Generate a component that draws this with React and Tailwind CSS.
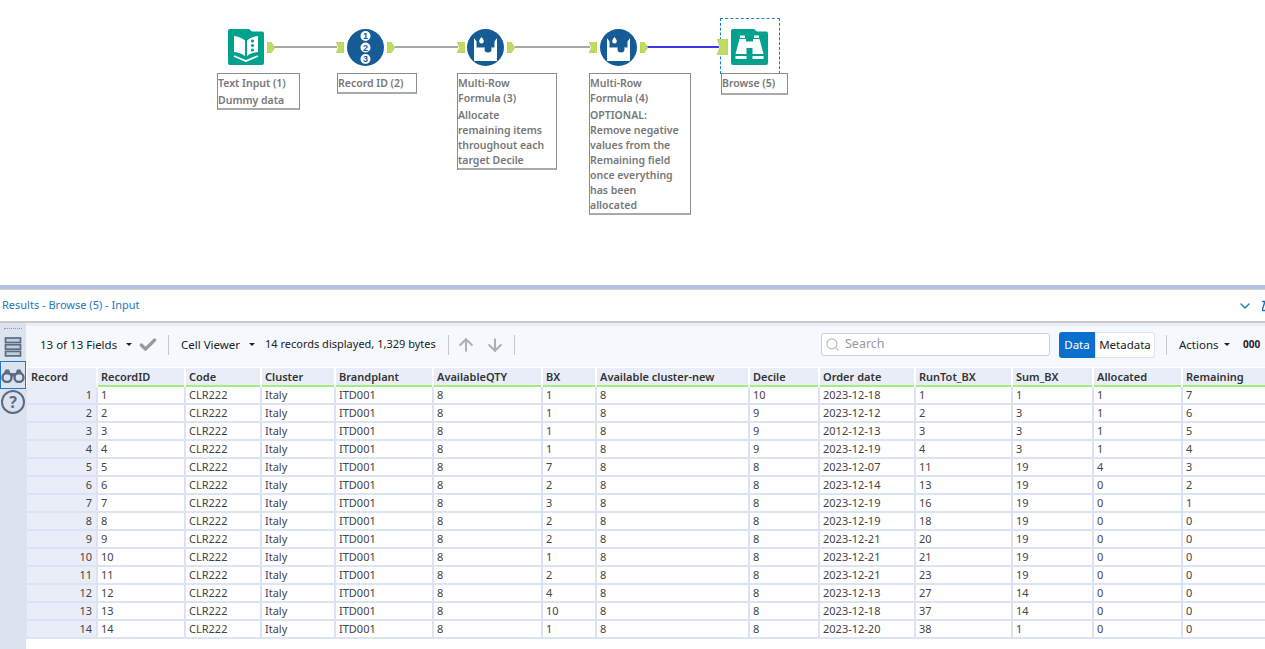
import React from 'react';
import { ChevronDown, Check, ArrowUp, ArrowDown, Search } from 'lucide-react';

const columns = ['RecordID', 'Code', 'Cluster', 'Brandplant', 'AvailableQTY', 'BX', 'Available cluster-new', 'Decile', 'Order date', 'RunTot_BX', 'Sum_BX', 'Allocated', 'Remaining'];

const rows = [
  [1, 8, 1, 10, '2023-12-18', 1, 1, 1, 7],
  [2, 8, 1, 9, '2023-12-12', 2, 3, 1, 6],
  [3, 8, 1, 9, '2012-12-13', 3, 3, 1, 5],
  [4, 8, 1, 9, '2023-12-19', 4, 3, 1, 4],
  [5, 8, 7, 8, '2023-12-07', 11, 19, 4, 3],
  [6, 8, 2, 8, '2023-12-14', 13, 19, 0, 2],
  [7, 8, 3, 8, '2023-12-19', 16, 19, 0, 1],
  [8, 8, 2, 8, '2023-12-19', 18, 19, 0, 0],
  [9, 8, 2, 8, '2023-12-21', 20, 19, 0, 0],
  [10, 8, 1, 8, '2023-12-21', 21, 19, 0, 0],
  [11, 8, 2, 8, '2023-12-21', 23, 19, 0, 0],
  [12, 8, 4, 8, '2023-12-13', 27, 14, 0, 0],
  [13, 8, 10, 8, '2023-12-18', 37, 14, 0, 0],
  [14, 8, 1, 8, '2023-12-20', 38, 1, 0, 0],
];

function Caret() {
  return <span className="w-0 h-0 border-x-[3px] border-x-transparent border-t-[3px] border-t-[#222]" />;
}

function OutAnchor({ className }) {
  return (
    <svg className={`absolute ${className}`} width="8" height="11" viewBox="0 0 8 11">
      <path d="M0 0h4l4 5.500-4 5.500H0z" fill="#bfdc62" stroke="#a9c653" strokeWidth="0.5" />
    </svg>
  );
}

function InAnchor({ className }) {
  return (
    <svg className={`absolute ${className}`} width="8" height="11" viewBox="0 0 8 11">
      <path d="M0 0h8v11H0l2.500-5.500z" fill="#bfdc62" stroke="#a9c653" strokeWidth="0.5" />
    </svg>
  );
}

function FormulaIcon({ className }) {
  return (
    <svg className={`absolute ${className}`} width="37" height="37" viewBox="0 0 37 37">
      <circle cx="18.500" cy="18.500" r="18.500" fill="#155c96" />
      <path d="M7 9l2.500 3.500v6h18v-6L30 9v23H7z" fill="#fff" />
      <path d="M14.500 8c1.500 1.900 2.300 3.100 2.300 4.200a2.300 2.300 0 0 1-4.600 0c0-1.100.8-2.300 2.300-4.200z" fill="#fff" />
      <path d="M21 13.500c2.200 2.900 3.500 4.800 3.500 6.600a3.500 3.500 0 0 1-7 0c0-1.800 1.300-3.700 3.500-6.600z" fill="#155c96" />
    </svg>
  );
}

function Canvas() {
  return (
    <div className="relative h-[285px] shrink-0 bg-white overflow-hidden text-[10.5px] leading-[15px] font-semibold text-[#777]">
      {/* connections */}
      <div className="absolute left-[274px] top-[46px] w-[63px] h-[2px] bg-[#a8a8a8]" />
      <div className="absolute left-[395px] top-[46px] w-[63px] h-[2px] bg-[#a8a8a8]" />
      <div className="absolute left-[515px] top-[46px] w-[75px] h-[2px] bg-[#a8a8a8]" />
      <div className="absolute left-[647px] top-[46px] w-[72px] h-[2px] bg-[#3a3ae0]" />

      {/* Text Input */}
      <svg className="absolute left-[228px] top-[29px]" width="36" height="36" viewBox="0 0 36 36">
        <path d="M2 0h19l3 2.500h10a2 2 0 0 1 2 2V34a2 2 0 0 1-2 2H2a2 2 0 0 1-2-2V2a2 2 0 0 1 2-2z" fill="#00a28d" />
        <path d="M6 7c4 .5 8 2 11 4.500V27c-3-2.500-7-3.500-11-4z" fill="#fff" />
        <path d="M30 7c-4 .5-8 2-11 4.500V27c3-2.500 7-3.500 11-4z" fill="#fff" />
        <path d="M6 27l12 5 12-5" fill="none" stroke="#fff" strokeWidth="1.800" />
        <circle cx="24.500" cy="12" r="1.600" fill="#00a28d" />
        <circle cx="24.500" cy="16.500" r="1.600" fill="#00a28d" />
        <circle cx="24.500" cy="21" r="1.600" fill="#00a28d" />
      </svg>
      <OutAnchor className="left-[267px] top-[42px]" />
      <div className="absolute left-[217px] top-[73px] w-[83px] h-[37px] border border-[#8c8c8c] border-b-2 border-b-[#aaa] pt-[2px] bg-white whitespace-nowrap">
        <div>Text Input (1)</div>
        <div className="mt-[2px]">Dummy data</div>
      </div>

      {/* Record ID */}
      <InAnchor className="left-[336px] top-[42px]" />
      <svg className="absolute left-[347px] top-[29px]" width="37" height="37" viewBox="0 0 37 37">
        <circle cx="18.500" cy="18.500" r="18.500" fill="#155c96" />
        <circle cx="18.500" cy="7" r="5" fill="#fff" />
        <circle cx="18.500" cy="18.500" r="5" fill="#fff" />
        <circle cx="18.500" cy="30" r="5" fill="#fff" />
        <text x="18.500" y="10.200" textAnchor="middle" fontSize="9" fontWeight="700" fill="#155c96" fontFamily="Liberation Sans">1</text>
        <text x="18.500" y="21.700" textAnchor="middle" fontSize="9" fontWeight="700" fill="#155c96" fontFamily="Liberation Sans">2</text>
        <text x="18.500" y="33.200" textAnchor="middle" fontSize="9" fontWeight="700" fill="#155c96" fontFamily="Liberation Sans">3</text>
      </svg>
      <OutAnchor className="left-[387px] top-[42px]" />
      <div className="absolute left-[337px] top-[73px] w-[80px] h-[21px] border border-[#8c8c8c] border-b-2 border-b-[#aaa] pt-[2px] bg-white whitespace-nowrap">
        <div>Record ID (2)</div>
      </div>

      {/* Multi-Row Formula 3 */}
      <InAnchor className="left-[457px] top-[42px]" />
      <FormulaIcon className="left-[467px] top-[29px]" />
      <OutAnchor className="left-[507px] top-[42px]" />
      <div className="absolute left-[457px] top-[73px] w-[100px] h-[97px] border border-[#8c8c8c] border-b-2 border-b-[#aaa] pt-[2px] bg-white whitespace-nowrap">
        <div>Multi-Row<br />Formula (3)</div>
        <div className="mt-[2px]">Allocate<br />remaining items<br />throughout each<br />target Decile</div>
      </div>

      {/* Multi-Row Formula 4 */}
      <InAnchor className="left-[589px] top-[42px]" />
      <FormulaIcon className="left-[600px] top-[29px]" />
      <OutAnchor className="left-[640px] top-[42px]" />
      <div className="absolute left-[589px] top-[73px] w-[102px] h-[142px] border border-[#8c8c8c] border-b-2 border-b-[#aaa] pt-[2px] bg-white whitespace-nowrap">
        <div>Multi-Row<br />Formula (4)</div>
        <div className="mt-[2px]">OPTIONAL:<br />Remove negative<br />values from the<br />Remaining field<br />once everything<br />has been<br />allocated</div>
      </div>

      {/* Browse */}
      <div className="absolute left-[720px] top-[18px] w-[60px] h-[56px] border border-dashed border-[#1a7fd0] border-b-0" />
      <svg className="absolute left-[717px] top-[39px]" width="11" height="16" viewBox="0 0 11 16">
        <path d="M0 0h11v16H0l3-8z" fill="#bfdc62" stroke="#a9c653" strokeWidth="0.5" />
      </svg>
      <svg className="absolute left-[731px] top-[29px]" width="37" height="36" viewBox="0 0 37 36">
        <path d="M2 0h21l3 2.500h9a2 2 0 0 1 2 2V34a2 2 0 0 1-2 2H2a2 2 0 0 1-2-2V2a2 2 0 0 1 2-2z" fill="#00a28d" />
        <rect x="9" y="6.500" width="5" height="2.500" fill="#fff" />
        <rect x="23" y="6.500" width="5" height="2.500" fill="#fff" />
        <path d="M8.500 10H15v2.500h7V10h6.500l4 15H21.500v-6h-6v6H4.500z" fill="#fff" />
        <rect x="4.500" y="27" width="11" height="3" fill="#fff" />
        <rect x="21.500" y="27" width="11" height="3" fill="#fff" />
      </svg>
      <div className="absolute left-[721px] top-[73px] w-[67px] h-[22px] border border-[#8c8c8c] border-b-2 border-b-[#aaa] pt-[2px] bg-white whitespace-nowrap">
        <div>Browse (5)</div>
      </div>
    </div>
  );
}

function Sidebar() {
  return (
    <div className="w-[26px] shrink-0 bg-[#dce3ef] flex flex-col items-center pt-[5px]">
      <div className="w-[18px] h-[1px] border-t border-dotted border-[#8a94a6] mb-[8px]" />
      <svg width="18" height="20" viewBox="0 0 18 20" fill="#c3ccdb" stroke="#5a6b82" strokeWidth="1.700">
        <rect x="1.500" y="1" width="15" height="4.500" />
        <rect x="1.500" y="7.700" width="15" height="4.500" />
        <rect x="1.500" y="14.400" width="15" height="4.500" />
      </svg>
      <div className="mt-[4px] w-[26px] h-[28px] border border-[#1f78c8] flex items-center justify-center">
        <svg width="24" height="16" viewBox="0 0 24 16" fill="#5a6b82">
          <circle cx="6" cy="10.500" r="4.500" fill="none" stroke="#5a6b82" strokeWidth="2.400" />
          <circle cx="18" cy="10.500" r="4.500" fill="none" stroke="#5a6b82" strokeWidth="2.400" />
          <path d="M2.500 7l2-4.500h3.500l2 5zM21.500 7l-2-4.500H16l-2 5z" />
          <rect x="10" y="6" width="4" height="3.500" />
        </svg>
      </div>
      <div className="mt-[1px] w-[24px] h-[24px] rounded-full border-[2.500px] border-[#5a6b82] flex items-center justify-center text-[16px] leading-none font-bold text-[#5a6b82]">?</div>
    </div>
  );
}

function Toolbar() {
  return (
    <div className="h-[41px] pb-[4px] bg-[#f5f8fd] flex items-center text-[11.500px] text-[#222] shrink-0 whitespace-nowrap">
      <span className="ml-[14px] w-[76px]">13 of 13 Fields</span>
      <span className="ml-[10px] flex"><Caret /></span>
      <Check className="ml-[6px] text-[#9a9a9a] shrink-0" size={20} strokeWidth={4} />
      <div className="ml-[10px] w-[1px] h-[20px] bg-[#c4c8ce] shrink-0" />
      <span className="ml-[12px] w-[59px]">Cell Viewer</span>
      <span className="ml-[9px] flex"><Caret /></span>
      <span className="ml-[10px] w-[172px] text-[11px]">14 records displayed, 1,329 bytes</span>
      <div className="ml-[11px] w-[1px] h-[20px] bg-[#c4c8ce] shrink-0" />
      <ArrowUp className="ml-[7px] text-[#b0b0b0] shrink-0" size={20} strokeWidth={2.500} />
      <ArrowDown className="ml-[9px] text-[#b0b0b0] shrink-0" size={20} strokeWidth={2.500} />
      <div className="ml-[9px] w-[1px] h-[20px] bg-[#c4c8ce] shrink-0" />
      <div className="ml-[306px] w-[229px] h-[23px] shrink-0 bg-white border border-[#c5cfdf] rounded-[3px] flex items-center px-[3px]">
        <Search className="text-[#b8bec6] shrink-0" size={15} />
        <span className="ml-[5px] text-[#9a9a9a] text-[12.500px]">Search</span>
      </div>
      <div className="ml-[9px] w-[36px] h-[26px] shrink-0 bg-[#0c6fcb] rounded-l-[3px] text-white flex items-center justify-center">Data</div>
      <div className="w-[60px] h-[26px] shrink-0 bg-white border border-[#dce3ef] rounded-r-[3px] flex items-center justify-center">Metadata</div>
      <div className="ml-[11px] w-[1px] h-[20px] bg-[#c4c8ce] shrink-0" />
      <span className="ml-[12px] w-[40px]">Actions</span>
      <span className="ml-[5px] flex"><Caret /></span>
      <span className="ml-[13px] text-[10px] font-bold">000</span>
    </div>
  );
}

function DataTable() {
  const grid = 'grid grid-cols-[69px_86px_74px_72px_96px_107px_52px_151px_68px_94px_95px_79px_87px_82px] gap-x-[2px] pl-[1px]';
  return (
    <div className="text-[11px] leading-[16px] text-[#444] whitespace-nowrap">
      <div className={`${grid} h-[19px] font-semibold text-[#333]`}>
        <div className="bg-[#e8edf7] pl-[4px] pt-[1px]">Record</div>
        {columns.map((c) => (
          <div key={c} className="bg-[#e8edf7] border-b-2 border-[#a3ee7d] pl-[3px] pt-[1px]">{c}</div>
        ))}
      </div>
      {rows.map((r) => (
        <div key={r[0]} className={`${grid} h-[18px] border-b-2 border-[#dce3f2] bg-[#dce3f2]`}>
          <div className="bg-[#e8edf7] text-right pr-[4px]">{r[0]}</div>
          <div className="bg-white pl-[3px]">{r[0]}</div>
          <div className="bg-white pl-[3px]">CLR222</div>
          <div className="bg-white pl-[3px]">Italy</div>
          <div className="bg-white pl-[3px]">ITD001</div>
          <div className="bg-white pl-[3px]">{r[1]}</div>
          <div className="bg-white pl-[3px]">{r[2]}</div>
          <div className="bg-white pl-[3px]">8</div>
          <div className="bg-white pl-[3px]">{r[3]}</div>
          <div className="bg-white pl-[3px]">{r[4]}</div>
          <div className="bg-white pl-[3px]">{r[5]}</div>
          <div className="bg-white pl-[3px]">{r[6]}</div>
          <div className="bg-white pl-[3px]">{r[7]}</div>
          <div className="bg-white pl-[3px]">{r[8]}</div>
        </div>
      ))}
    </div>
  );
}

export default function App() {
  return (
    <div className="w-[1265px] h-[649px] overflow-hidden bg-white flex flex-col font-['Noto_Sans','Open_Sans',sans-serif]">
      <Canvas />
      {/* splitter */}
      <div className="h-[4px] bg-[#b4c3e0] shrink-0" />
      <div className="h-[1px] bg-[#d0d0d0] shrink-0" />

      {/* Results title */}
      <div className="h-[33px] shrink-0 flex items-center justify-between border-b-2 border-[#c9c9c9] text-[11px] text-[#1c78bd] pl-[2px]">
        <span>Results - Browse (5) - Input</span>
        <div className="flex items-center">
          <ChevronDown className="text-[#1c78bd]" size={16} />
          <svg className="ml-[9px]" width="3" height="12" viewBox="0 0 3 12" fill="none" stroke="#1c78bd" strokeWidth="1.500">
            <path d="M0 1.500h3M3 1.500L0 10.500M0 10.500h3" />
          </svg>
        </div>
      </div>

      <div className="flex-1 flex min-h-0">
        <Sidebar />
        <div className="flex-1 flex flex-col min-w-0 pt-[3px] bg-[#e8edf7]">
          <Toolbar />
          <div className="flex-1 bg-white pt-[1px]">
            <DataTable />
          </div>
        </div>
      </div>
    </div>
  );
}
